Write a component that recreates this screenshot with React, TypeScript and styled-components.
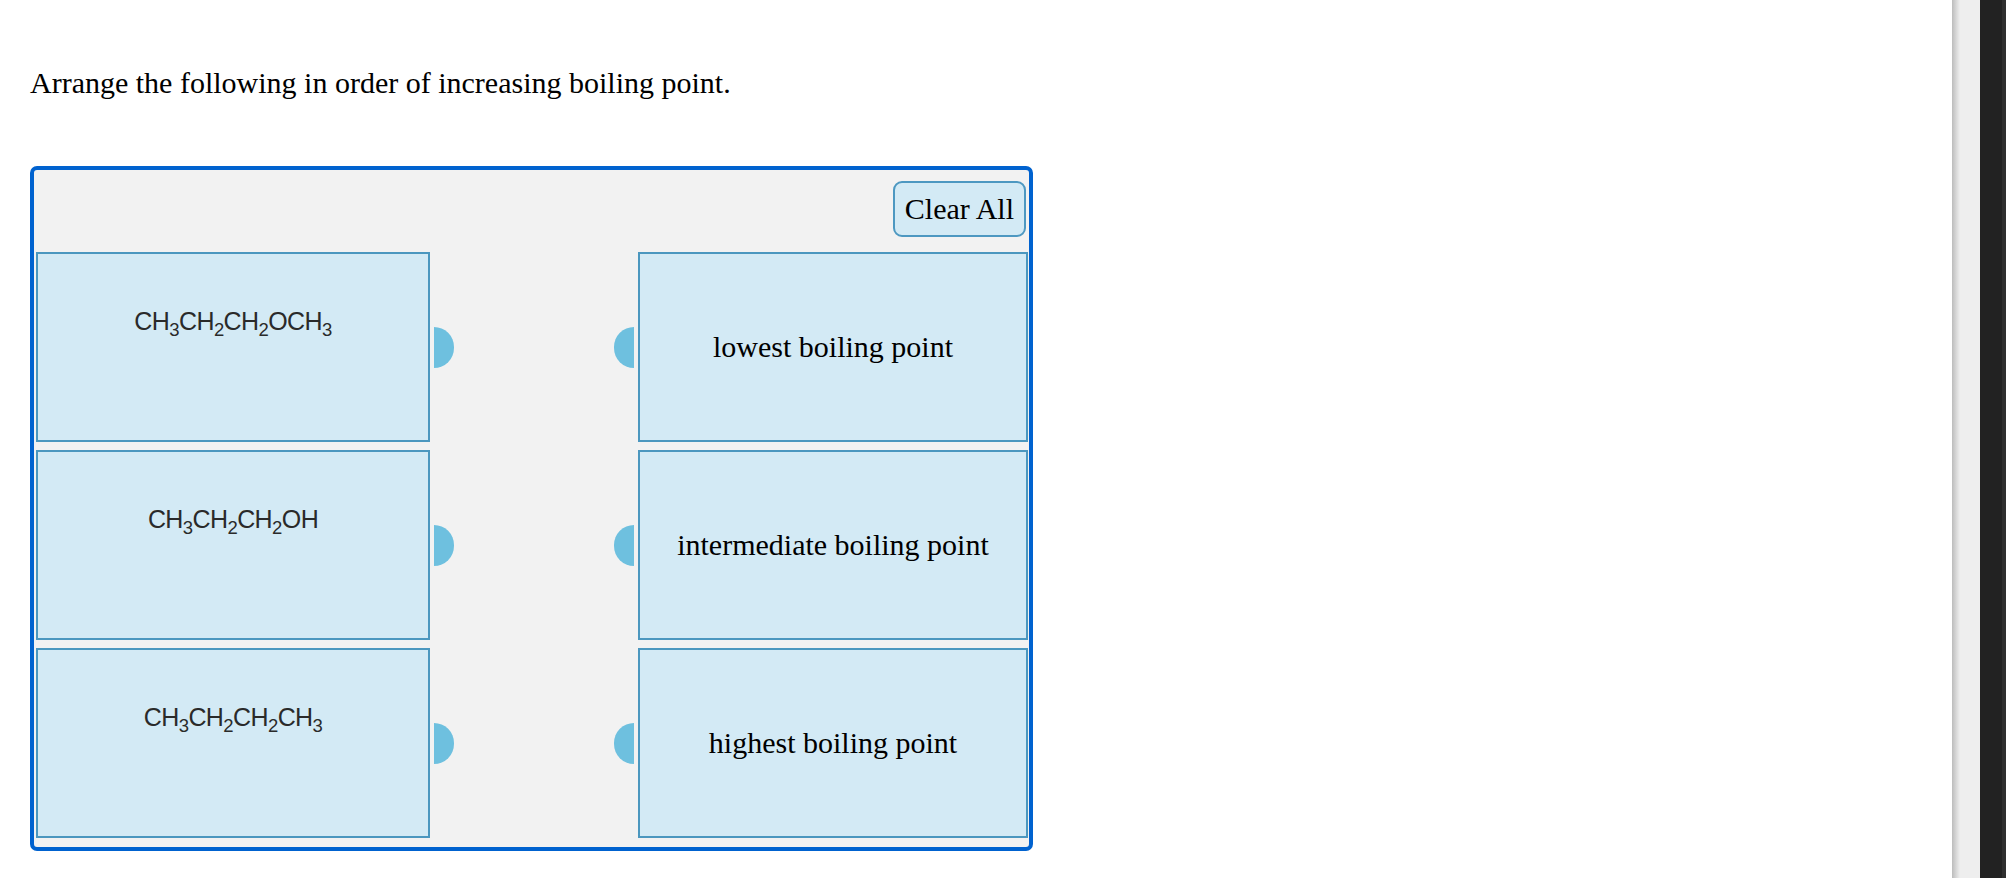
import React from "react";
import styled, { createGlobalStyle } from "styled-components";

const GlobalStyle = createGlobalStyle`
  html, body {
    margin: 0;
    padding: 0;
    background: #ffffff;
  }
  body {
    font-family: "Liberation Serif", "Times New Roman", serif;
    color: #000000;
  }
`;

const Page = styled.div`
  display: flex;
  min-height: 100vh;
`;

const Main = styled.main`
  flex: 1;
  padding: 66px 0 0 30px;
`;

const Prompt = styled.p`
  margin: 0;
  font-size: 30px;
  line-height: 34px;
`;

const Board = styled.section`
  margin-top: 66px;
  width: 1003px;
  box-sizing: border-box;
  border: 4px solid #0062cf;
  border-radius: 7px;
  background: #f2f2f2;
  padding: 11px 1px 9px 2px;
`;

const Toolbar = styled.div`
  display: flex;
  justify-content: flex-end;
  padding-right: 2px;
  margin-bottom: 15px;
`;

const ClearButton = styled.button`
  height: 56px;
  box-sizing: border-box;
  padding: 0 10px;
  border: 2px solid #4d98c1;
  border-radius: 9px;
  background: #d3eaf5;
  font-family: "Liberation Serif", "Times New Roman", serif;
  font-size: 30px;
  color: #000000;
  cursor: pointer;
`;

const Rows = styled.div`
  display: grid;
  grid-template-columns: 394px 1fr 390px;
  grid-auto-rows: 190px;
  row-gap: 8px;
`;

const Card = styled.div`
  box-sizing: border-box;
  border: 2px solid #4b97bf;
  background: #d3eaf5;
  display: flex;
  justify-content: center;
`;

const SourceCard = styled(Card)`
  align-items: flex-start;
  padding-top: 55px;
`;

const TargetCard = styled(Card)`
  align-items: center;
  font-size: 30px;
  line-height: 34px;
`;

const Connectors = styled.div`
  display: flex;
  align-items: center;
  justify-content: space-between;
  padding: 0 4px;
`;

const Knob = styled.span<{ $facing: "left" | "right" }>`
  display: block;
  width: 20px;
  height: 41px;
  background: #6ec0df;
  border-radius: ${(p) => (p.$facing === "right" ? "0 21px 21px 0" : "21px 0 0 21px")};
  filter: blur(0.5px);
`;

const Formula = styled.span`
  font-family: "Liberation Sans", Arial, sans-serif;
  font-size: 25px;
  line-height: 1;
  letter-spacing: -0.6px;
  color: #2a2a2a;

  sub {
    font-size: 0.74em;
    line-height: 0;
    vertical-align: -0.32em;
  }
`;

const Scrollbar = styled.div`
  width: 28px;
  background: linear-gradient(to right, #bcbcbc 0px, #dcdcdc 5px, #eeeeee 8px, #eeeeee 100%);
`;

const WindowEdge = styled.div`
  width: 26px;
  background: linear-gradient(to right, #222222 0px, #222222 22px, #2f2f2f 22px);
`;

type Part = [string, string?];

const compounds: Part[][] = [
  [["CH", "3"], ["CH", "2"], ["CH", "2"], ["OCH", "3"]],
  [["CH", "3"], ["CH", "2"], ["CH", "2"], ["OH"]],
  [["CH", "3"], ["CH", "2"], ["CH", "2"], ["CH", "3"]],
];

const targets = ["lowest boiling point", "intermediate boiling point", "highest boiling point"];

function ChemFormula({ parts }: { parts: Part[] }) {
  return (
    <Formula>
      {parts.map(([atoms, count], i) => (
        <React.Fragment key={i}>
          {atoms}
          {count && <sub>{count}</sub>}
        </React.Fragment>
      ))}
    </Formula>
  );
}

export default function App() {
  return (
    <>
      <GlobalStyle />
      <Page>
        <Main>
          <Prompt>Arrange the following in order of increasing boiling point.</Prompt>
          <Board>
            <Toolbar>
              <ClearButton type="button">Clear All</ClearButton>
            </Toolbar>
            <Rows>
              {compounds.map((parts, i) => (
                <React.Fragment key={i}>
                  <SourceCard>
                    <ChemFormula parts={parts} />
                  </SourceCard>
                  <Connectors>
                    <Knob $facing="right" />
                    <Knob $facing="left" />
                  </Connectors>
                  <TargetCard>{targets[i]}</TargetCard>
                </React.Fragment>
              ))}
            </Rows>
          </Board>
        </Main>
        <Scrollbar />
        <WindowEdge />
      </Page>
    </>
  );
}
